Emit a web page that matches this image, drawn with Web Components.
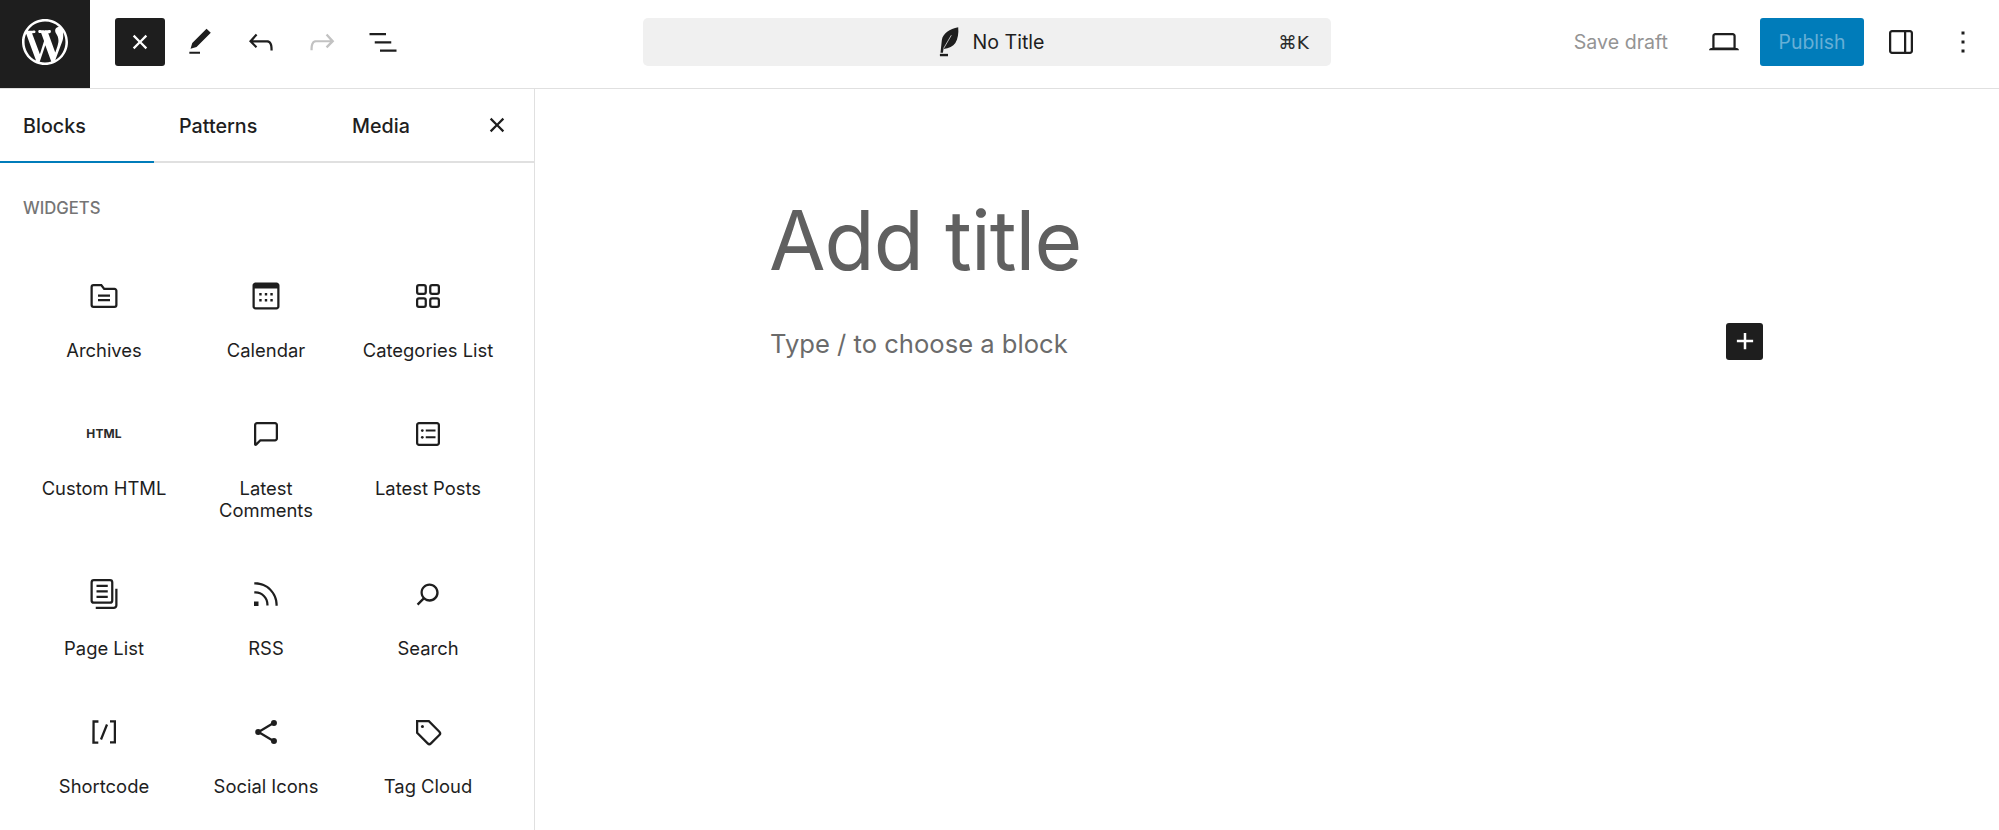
<!DOCTYPE html>
<html lang="en">
<head>
<meta charset="utf-8">
<title>New Post</title>
<style>
  html, body { margin: 0; height: 100%; background: #fff; }
  body { font-family: Inter, "Liberation Sans", sans-serif; color: #1e1e1e; overflow: hidden; }
</style>
</head>
<body>
<wp-editor-app>
  <wp-top-bar slot="top"></wp-top-bar>
  <wp-inserter slot="side">
    <wp-block-item icon="archive">Archives</wp-block-item>
    <wp-block-item icon="calendar">Calendar</wp-block-item>
    <wp-block-item icon="categories">Categories List</wp-block-item>
    <wp-block-item icon="html">Custom HTML</wp-block-item>
    <wp-block-item icon="comment">Latest Comments</wp-block-item>
    <wp-block-item icon="postList">Latest Posts</wp-block-item>
    <wp-block-item icon="pages">Page List</wp-block-item>
    <wp-block-item icon="rss">RSS</wp-block-item>
    <wp-block-item icon="search">Search</wp-block-item>
    <wp-block-item icon="shortcode">Shortcode</wp-block-item>
    <wp-block-item icon="share">Social Icons</wp-block-item>
    <wp-block-item icon="tag">Tag Cloud</wp-block-item>
  </wp-inserter>
  <wp-canvas slot="main"></wp-canvas>
</wp-editor-app>

<script>
  // 24x24 glyphs, same grid as the editor's icon set
  const ICONS = {
    close: '<path d="M12 13.06l3.712 3.713 1.061-1.06L13.061 12l3.712-3.712-1.06-1.06L12 10.938 8.288 7.227l-1.061 1.06L10.939 12l-3.712 3.712 1.06 1.061L12 13.061z"/>',
    pencil: '<path d="M20.1 5.1L16.9 2 6.2 12.7l-1.3 4.4 4.5-1.3L20.1 5.1zM4 20.8h8v-1.5H4v1.5z"/>',
    undo: '<path d="M18.3 11.7c-.6-.6-1.4-.9-2.3-.9H6.7l2.9-3.3-1.1-1-4.5 5L8.5 16l1-1-2.7-2.7H16c.5 0 .9.2 1.3.5 1 1 1 3.4 1 4.5v.3h1.5v-.2c0-1.5 0-4.3-1.5-5.7z"/>',
    redo: '<path d="M15.6 6.5l-1.1 1 2.9 3.3H8c-.9 0-1.7.3-2.3.9-1.4 1.5-1.4 4.2-1.4 5.6v.2h1.5v-.3c0-1.1 0-3.5 1-4.5.3-.3.7-.5 1.3-.5h9.2L14.5 15l1.1 1.1 4.6-4.6-4.6-5z"/>',
    listView: '<path d="M3 6h11v1.5H3V6Zm3.5 5.5h11V13h-11v-1.5ZM21 17H10v1.5h11V17Z"/>',
    feather: '<path d="M18.8 2.2c.4 4-.2 7.800-1.900 10.500-1.500 2.400-4.200 3.600-7.900 3.900L8.600 19.200H7l.9-8.600c.7-4.100 5.200-7.400 10.900-8.400z"/><path d="M6.600 19.900h5.400v1.600H6.600z"/><path d="M9 16.400l5.200-8.900" fill="none" stroke="#f0f0f0" stroke-width=".5"/>',
    desktop: '<path d="M20.5 16h-.7V8c0-1.100-.9-2-2-2H6.200c-1.100 0-2 .9-2 2v8h-.7c-.8 0-1.500.7-1.500 1.500h20c0-.8-.7-1.500-1.500-1.500zM5.700 8c0-.3.2-.5.5-.5h11.600c.3 0 .5.2.5.5v7.600H5.700V8z"/>',
    sidebar: '<path d="M18 4H6c-1.100 0-2 .9-2 2v12c0 1.100.9 2 2 2h12c1.100 0 2-.9 2-2V6c0-1.100-.9-2-2-2zm-4 14.500H6c-.3 0-.5-.2-.5-.5V6c0-.3.2-.5.5-.5h8v13zm4.500-.5c0 .3-.2.5-.5.5h-2.500v-13H18c.3 0 .5.2.5.5v12z"/>',
    dots: '<path d="M13 19h-2v-2h2v2zm0-6h-2v-2h2v2zm0-6h-2V5h2v2z"/>',
    plus: '<path d="M11 5.500h2V11h5.500v2H13v5.500h-2V13H5.500v-2H11z"/>',
    archive: '<g fill="none" stroke="currentColor" stroke-width="1.500"><path d="M5 4.750h5.200l1.900 2.500H19a1.250 1.250 0 0 1 1.250 1.250V18A1.250 1.250 0 0 1 19 19.250H5A1.250 1.250 0 0 1 3.750 18V6A1.250 1.250 0 0 1 5 4.750z"/><path d="M8 11.750h8M8 14.750h8"/></g>',
    calendar: '<path d="M19 3H5c-1.100 0-2 .9-2 2v14c0 1.100.9 2 2 2h14c1.100 0 2-.9 2-2V5c0-1.100-.9-2-2-2zm.5 16c0 .3-.2.5-.5.5H5c-.3 0-.5-.2-.5-.5V7h15v12z"/><path d="M7.500 10h1.600v1.600H7.500zM7.500 14h1.600v1.600H7.500zM11.200 10h1.600v1.600h-1.600zM14.900 10h1.600v1.600h-1.600zM11.200 14h1.600v1.600h-1.600zM14.900 14h1.600v1.600h-1.600z"/>',
    categories: '<g fill="none" stroke="currentColor" stroke-width="1.500"><rect x="4.750" y="4.750" width="5.750" height="5.750" rx="1.250"/><rect x="13.500" y="4.750" width="5.750" height="5.750" rx="1.250"/><rect x="4.750" y="13.500" width="5.750" height="5.750" rx="1.250"/><rect x="13.500" y="13.500" width="5.750" height="5.750" rx="1.250"/></g>',
    comment: '<path d="M18 4H6c-1.100 0-2 .9-2 2v12.900c0 .6.5 1.100 1.100 1.100.3 0 .5-.1.8-.3L8.500 17H18c1.100 0 2-.9 2-2V6c0-1.100-.9-2-2-2zm.5 11c0 .3-.2.5-.5.5H7.900l-2.400 2.400V6c0-.3.2-.5.5-.5h12c.3 0 .5.2.5.5v9z"/>',
    postList: '<path d="M18 4H6c-1.100 0-2 .9-2 2v12c0 1.100.9 2 2 2h12c1.100 0 2-.9 2-2V6c0-1.100-.9-2-2-2zm.5 14c0 .3-.2.5-.5.5H6c-.3 0-.5-.2-.5-.5V6c0-.3.2-.5.5-.5h12c.3 0 .5.2.5.5v12z"/><circle cx="8.200" cy="9.700" r=".9"/><circle cx="8.200" cy="14.200" r=".9"/><path d="M10.500 9h6.500v1.300h-6.500zM10.500 13.500h6.500v1.300h-6.500z"/>',
    pages: '<g fill="none" stroke="currentColor" stroke-width="1.500"><rect x="3.750" y="2.750" width="13.750" height="15" rx="1.500"/><path d="M7 6.500h7.500M7 10.200h7.500M7 13.900h7.500"/><path d="M20.250 8.500V19.500a1.750 1.750 0 0 1-1.750 1.750H6.500"/></g>',
    rss: '<path d="M5 10.200h-.8v1.500H5c1.900 0 3.800.8 5.100 2.100 1.400 1.400 2.100 3.200 2.100 5.100v.8h1.500V19c0-2.300-.9-4.500-2.600-6.200-1.600-1.600-3.800-2.600-6.100-2.600zm10.400-1.600C12.600 5.800 8.900 4.200 5 4.200h-.8v1.500H5c3.500 0 6.900 1.400 9.400 3.900s3.900 5.800 3.900 9.400v.8h1.500V19c0-3.900-1.600-7.600-4.400-10.400zM4 20h3v-3H4v3z"/>',
    search: '<path d="M13 5c-3.300 0-6 2.700-6 6 0 1.400.5 2.700 1.300 3.700l-3.800 3.800 1.100 1.100 3.800-3.800c1 .8 2.300 1.300 3.700 1.300 3.300 0 6-2.700 6-6S16.300 5 13 5zm0 10.500c-2.500 0-4.500-2-4.500-4.500s2-4.500 4.500-4.500 4.500 2 4.500 4.500-2 4.500-4.500 4.500z"/>',
    shortcode: '<path d="M16 4.200v1.500h2.500v12.500H16v1.500h4V4.200h-4zM4.200 19.800h4v-1.500H5.800V5.800h2.500V4.200h-4l-.1 15.600zm5.100-3.100l1.400.6 4-10-1.400-.6-4 10z"/>',
    share: '<path d="M17 6L7 12l10 6" fill="none" stroke="currentColor" stroke-width="1.500"/><circle cx="17.300" cy="6" r="2"/><circle cx="6.800" cy="12" r="2"/><circle cx="17.300" cy="18" r="2"/>',
    tag: '<path d="M4.750 4.750h7.830l7 7.030a1.560 1.560 0 0 1 0 2.200l-5.600 5.600a1.560 1.560 0 0 1-2.200 0l-7.030-7v-7.830z" fill="none" stroke="currentColor" stroke-width="1.500"/><circle cx="8.300" cy="8.300" r="1"/>'
  };

  class WpIcon extends HTMLElement {
    connectedCallback() {
      const size = this.getAttribute('size') || 36;
      this.attachShadow({ mode: 'open' }).innerHTML = `
        <style>
          :host { display: inline-flex; width: ${size}px; height: ${size}px; color: inherit; }
          svg { display: block; width: 100%; height: 100%; fill: currentColor; }
        </style>
        <svg viewBox="0 0 24 24" aria-hidden="true">${ICONS[this.getAttribute('name')] || ''}</svg>
      `;
    }
  }

  class WpIconButton extends HTMLElement {
    connectedCallback() {
      const size = this.getAttribute('size') || 36;
      this.attachShadow({ mode: 'open' }).innerHTML = `
        <style>
          :host {
            display: flex;
            align-items: center;
            justify-content: center;
            width: var(--btn-width, 61px);
            height: 48px;
            color: #1e1e1e;
          }
          :host([disabled]) { color: #c2c2c2; }
          :host([pressed]) { background: #1e1e1e; color: #fff; border-radius: 3px; width: 50px; }
        </style>
        <wp-icon name="${this.getAttribute('icon')}" size="${size}"></wp-icon>
      `;
    }
  }

  class WpCommandBar extends HTMLElement {
    constructor() {
      super();
      this.attachShadow({ mode: 'open' }).innerHTML = `
        <style>
          :host {
            display: grid;
            grid-template-columns: 1fr auto 1fr;
            align-items: center;
            width: 688px;
            height: 48px;
            margin-left: 230px;
            background: #f0f0f0;
            border-radius: 5px;
            font-size: 19.6px;
            color: #1e1e1e;
          }
          .title { grid-column: 2; display: flex; align-items: center; gap: 7px; }
          .keys { justify-self: end; padding-right: 22px; font-size: 18.5px; color: #2a2a2a; font-family: "DejaVu Sans", Inter, sans-serif; }
        </style>
        <div class="title"><wp-icon name="feather" size="36"></wp-icon><span>No Title</span></div>
        <div class="keys">⌘K</div>
      `;
    }
  }

  class WpTopBar extends HTMLElement {
    constructor() {
      super();
      this.attachShadow({ mode: 'open' }).innerHTML = `
        <style>
          :host {
            display: flex;
            align-items: flex-start;
            height: 88px;
            border-bottom: 1px solid #e0e0e0;
            background: #fff;
          }
          .logo {
            display: flex;
            align-items: center;
            justify-content: center;
            flex: none;
            box-sizing: border-box;
            width: 90px;
            height: 88px;
            padding-bottom: 4px;
            background: #1e1e1e;
            color: #fff;
          }
          .logo svg { width: 46px; height: 46px; fill: currentColor; display: block; }
          .left, .right, wp-command-bar { margin-top: 18px; }
          .left { display: flex; align-items: center; padding-left: 25px; }
          .left wp-icon-button[pressed] { margin-right: 4px; }
          .right { display: flex; align-items: center; margin-left: auto; padding-right: 6px; }
          .save { font-size: 19.6px; color: #949494; margin-right: 25px; }
          .publish {
            display: flex;
            align-items: center;
            justify-content: center;
            width: 104px;
            height: 48px;
            margin: 0 6px 0 6px;
            background: #007cba;
            border-radius: 3px;
            color: #66afd6;
            font-size: 19.4px;
          }
          .toggle { margin-right: 1px; }
        </style>
        <div class="logo">
          <svg viewBox="0 0 20 20" aria-hidden="true"><path d="M20 10c0-5.510-4.490-10-10-10C4.480 0 0 4.490 0 10c0 5.520 4.480 10 10 10 5.510 0 10-4.480 10-10zM7.780 15.370L4.370 6.220c.55-.02 1.170-.08 1.170-.08.5-.06.44-1.130-.06-1.110 0 0-1.450.11-2.370.11-.18 0-.37 0-.58-.01C4.120 2.690 6.870 1.110 10 1.110c2.330 0 4.450.87 6.050 2.340-.68-.11-1.650.39-1.650 1.580 0 .74.45 1.360.9 2.100.35.61.55 1.360.55 2.460 0 1.490-1.400 5-1.400 5l-3.030-8.370c.54-.02.82-.17.82-.17.5-.05.44-1.250-.06-1.220 0 0-1.440.12-2.380.12-.87 0-2.330-.12-2.330-.12-.5-.03-.56 1.200-.06 1.220l.92.08 1.260 3.410zM17.410 10c.24-.64.74-1.870.43-4.250.7 1.290 1.050 2.710 1.050 4.250 0 3.290-1.730 6.240-4.400 7.780.97-2.590 1.940-5.200 2.920-7.780zM6.100 18.090C3.120 16.650 1.110 13.530 1.110 10c0-1.300.23-2.480.72-3.590C3.250 10.300 4.670 14.200 6.100 18.090zm4.030-6.630l2.580 6.980c-.86.29-1.760.45-2.710.45-.79 0-1.570-.11-2.290-.33.81-2.380 1.620-4.740 2.420-7.100z"/></svg>
        </div>
        <div class="left">
          <wp-icon-button icon="close" pressed></wp-icon-button>
          <wp-icon-button icon="pencil" size="32"></wp-icon-button>
          <wp-icon-button icon="undo"></wp-icon-button>
          <wp-icon-button icon="redo" disabled></wp-icon-button>
          <wp-icon-button icon="listView"></wp-icon-button>
        </div>
        <wp-command-bar></wp-command-bar>
        <div class="right">
          <span class="save">Save draft</span>
          <wp-icon-button icon="desktop"></wp-icon-button>
          <div class="publish">Publish</div>
          <wp-icon-button class="toggle" icon="sidebar"></wp-icon-button>
          <wp-icon-button icon="dots"></wp-icon-button>
        </div>
      `;
    }
  }

  class WpBlockItem extends HTMLElement {
    connectedCallback() {
      const icon = this.getAttribute('icon');
      const glyph = icon === 'html'
        ? '<span class="html">HTML</span>'
        : `<wp-icon name="${icon}"></wp-icon>`;
      this.attachShadow({ mode: 'open' }).innerHTML = `
        <style>
          :host {
            display: flex;
            flex-direction: column;
            align-items: center;
            padding: 17px 8px 38px;
            font-size: 18.4px;
            line-height: 22px;
            text-align: center;
            color: #1e1e1e;
          }
          .icon { display: flex; align-items: center; justify-content: center; height: 36px; margin-bottom: 25px; }
          .html { font-size: 12px; font-weight: 700; letter-spacing: .1px; color: #2b2b2b; }
        </style>
        <div class="icon">${glyph}</div>
        <slot></slot>
      `;
    }
  }

  class WpInserter extends HTMLElement {
    constructor() {
      super();
      this.attachShadow({ mode: 'open' }).innerHTML = `
        <style>
          :host {
            display: block;
            width: 534px;
            height: 100%;
            border-right: 1px solid #e0e0e0;
            overflow: hidden;
          }
          .tabs {
            display: flex;
            align-items: center;
            height: 72px;
            box-sizing: content-box;
            border-bottom: 2px solid #e0e0e0;
            font-size: 19.7px;
            font-weight: 500;
          }
          .tab { position: relative; height: 100%; display: flex; align-items: center; box-sizing: border-box; padding-top: 2px; }
          .tab.active { width: 154px; padding-left: 23px; }
          /* blue underline sits over the tab strip border */
          .tab.active::after {
            content: "";
            position: absolute;
            left: 0;
            right: 0;
            bottom: -2px;
            height: 2px;
            background: #007cba;
          }
          .tab.patterns { margin-left: 25px; width: 173px; }
          .tabs wp-icon { margin: -1px 19px 0 auto; color: #1e1e1e; }
          .section { padding: 35px 23px 0; }
          h2 {
            margin: 0 0 43px;
            font-size: 16.7px;
            line-height: 20px;
            font-weight: 500;
            color: #757575;
            text-transform: uppercase;
          }
          .grid { display: grid; grid-template-columns: repeat(3, 162px); }
        </style>
        <div class="tabs">
          <div class="tab active">Blocks</div>
          <div class="tab patterns">Patterns</div>
          <div class="tab">Media</div>
          <wp-icon name="close"></wp-icon>
        </div>
        <div class="section">
          <h2>Widgets</h2>
          <div class="grid"><slot></slot></div>
        </div>
      `;
    }
  }

  class WpCanvas extends HTMLElement {
    constructor() {
      super();
      this.attachShadow({ mode: 'open' }).innerHTML = `
        <style>
          :host { display: block; flex: 1; padding: 100px 0 0 234px; }
          .title { font-size: 82px; line-height: 104px; color: #606060; letter-spacing: -1px; }
          .row { display: flex; align-items: center; justify-content: space-between; width: 994px; margin-top: 25px; }
          .hint { font-size: 25.6px; line-height: 40px; margin-top: 6px; margin-left: 1px; color: #6b6b6b; }
          .add {
            display: flex;
            align-items: center;
            justify-content: center;
            width: 37px;
            height: 37px;
            background: #1e1e1e;
            border-radius: 3px;
            color: #fff;
          }
        </style>
        <div class="title">Add title</div>
        <div class="row">
          <div class="hint">Type / to choose a block</div>
          <div class="add"><wp-icon name="plus" size="30"></wp-icon></div>
        </div>
      `;
    }
  }

  class WpEditorApp extends HTMLElement {
    constructor() {
      super();
      this.attachShadow({ mode: 'open' }).innerHTML = `
        <style>
          :host { display: flex; flex-direction: column; height: 100vh; }
          .body { display: flex; flex: 1; min-height: 0; }
        </style>
        <slot name="top"></slot>
        <div class="body">
          <slot name="side"></slot>
          <slot name="main"></slot>
        </div>
      `;
    }
  }

  customElements.define('wp-icon', WpIcon);
  customElements.define('wp-icon-button', WpIconButton);
  customElements.define('wp-command-bar', WpCommandBar);
  customElements.define('wp-top-bar', WpTopBar);
  customElements.define('wp-block-item', WpBlockItem);
  customElements.define('wp-inserter', WpInserter);
  customElements.define('wp-canvas', WpCanvas);
  customElements.define('wp-editor-app', WpEditorApp);
</script>
</body>
</html>
